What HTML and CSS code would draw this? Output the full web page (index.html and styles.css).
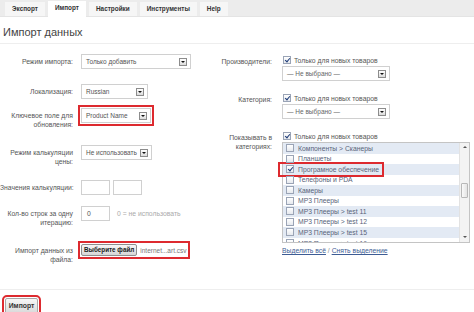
FILE: index.html
```html
<!DOCTYPE html>
<html lang="ru">
<head>
    <meta charset="UTF-8">
    <meta name="viewport" content="width=device-width, initial-scale=1.0">
    <title>Импорт данных</title>
    <link rel="stylesheet" href="styles.css">
</head>
<body>
    <div class="tabs">
        <span class="tab">Экспорт</span>
        <span class="tab active">Импорт</span>
        <span class="tab">Настройки</span>
        <span class="tab">Инструменты</span>
        <span class="tab">Help</span>
    </div>

    <h1 class="page-title">Импорт данных</h1>

    <div class="columns">
        <div class="col col-left">
            <div class="field">
                <label class="field-label">Режим импорта:</label>
                <span class="select select-import">Только добавить<i class="arrow"></i></span>
            </div>
            <div class="field">
                <label class="field-label">Локализация:</label>
                <span class="select select-locale">Russian<i class="arrow"></i></span>
            </div>
            <div class="field">
                <label class="field-label">Ключевое поле для обновления:</label>
                <span class="select select-key marked">Product Name<i class="arrow"></i></span>
            </div>
            <div class="field">
                <label class="field-label">Режим калькуляции цены:</label>
                <span class="select select-calc">Не использовать<i class="arrow"></i></span>
            </div>
            <div class="field">
                <label class="field-label nowrap">Значения калькуляции:</label>
                <div class="inline">
                    <span class="input"></span>
                    <span class="input"></span>
                </div>
            </div>
            <div class="field">
                <label class="field-label">Кол-во строк за одну итерацию:</label>
                <div class="inline">
                    <span class="input">0</span>
                    <span class="hint">0 = не использовать</span>
                </div>
            </div>
            <div class="field">
                <label class="field-label">Импорт данных из файла:</label>
                <div class="file-wrap">
                    <div class="file marked">
                        <span class="file-btn">Выберите файл</span>
                        <span class="file-name">internet...art.csv</span>
                    </div>
                </div>
            </div>
        </div>

        <div class="col col-right">
            <div class="field field-wide">
                <label class="field-label">Производители:</label>
                <div class="stack">
                    <span class="check-line"><i class="check on"></i>Только для новых товаров</span>
                    <span class="select select-wide">— Не выбрано —<i class="arrow"></i></span>
                </div>
            </div>
            <div class="field field-wide">
                <label class="field-label">Категория:</label>
                <div class="stack">
                    <span class="check-line"><i class="check on"></i>Только для новых товаров</span>
                    <span class="select select-wide">— Не выбрано —<i class="arrow"></i></span>
                </div>
            </div>
            <div class="field field-wide">
                <label class="field-label">Показывать в категориях:</label>
                <div class="stack">
                    <span class="check-line"><i class="check on"></i>Только для новых товаров</span>
                    <div class="list">
                        <div class="list-items">
                            <div class="list-row"><i class="check"></i>Компоненты &gt; Сканеры</div>
                            <div class="list-row"><i class="check"></i>Планшеты</div>
                            <div class="list-row"><span class="marked-row"><i class="check on"></i>Програмное обеспечение</span></div>
                            <div class="list-row"><i class="check"></i>Телефоны и PDA</div>
                            <div class="list-row"><i class="check"></i>Камеры</div>
                            <div class="list-row"><i class="check"></i>MP3 Плееры</div>
                            <div class="list-row"><i class="check"></i>MP3 Плееры &gt; test 11</div>
                            <div class="list-row"><i class="check"></i>MP3 Плееры &gt; test 12</div>
                            <div class="list-row"><i class="check"></i>MP3 Плееры &gt; test 15</div>
                            <div class="list-row list-row-cut"><i class="check"></i>MP3 Плееры &gt; test 16</div>
                        </div>
                        <div class="scrollbar">
                            <span class="scroll-btn up"></span>
                            <span class="scroll-track"><span class="scroll-thumb"></span></span>
                            <span class="scroll-btn down"></span>
                        </div>
                    </div>
                    <div class="list-links">
                        <a href="#">Выделить всё</a> / <a href="#">Снять выделение</a>
                    </div>
                </div>
            </div>
        </div>
    </div>

    <div class="footer">
        <span class="submit marked">Импорт</span>
    </div>
</body>
</html>
```

FILE: styles.css
```css
body {
    margin: 0;
    width: 474px;
    height: 312px;
    overflow: hidden;
    font-family: 'Liberation Sans', Arial, sans-serif;
    font-size: 6.8px;
    line-height: 9px;
    color: #555;
    background-color: #fff;
}

.tabs {
    display: flex;
    align-items: flex-end;
    gap: 3px;
    height: 17px;
    padding-left: 5px;
    background-color: #ececec;
    border-bottom: 1px solid #e4e4e4;
    box-sizing: border-box;
}

.tab {
    height: 14px;
    line-height: 14px;
    padding: 0 7px;
    background-color: #f6f6f6;
    color: #333;
    font-size: 6.4px;
    font-weight: bold;
}

.tab.active {
    height: 16px;
    margin-bottom: -1px;
    background-color: #fff;
}

.page-title {
    margin: 0;
    padding: 8px 3px 4px;
    font-size: 11px;
    line-height: 14px;
    font-weight: normal;
    color: #444;
    border-bottom: 1px solid #eee;
}

.columns {
    display: flex;
}

.col-left {
    width: 200px;
    padding-top: 10px;
    display: grid;
    grid-template-rows: 30px 24px 37px 35px 26px 37px auto;
}

.col-right {
    flex: 1;
    padding-top: 11px;
}

.field {
    display: grid;
    grid-template-columns: 73px auto;
    column-gap: 8px;
    align-items: start;
}

.field-wide {
    grid-template-columns: 72px auto;
    column-gap: 10px;
    margin-bottom: 12px;
}

.field-label {
    text-align: right;
    padding-top: 3px;
    color: #555;
}

.field-label.nowrap {
    white-space: nowrap;
}

.field-wide .field-label {
    padding-top: 2px;
}

.select {
    display: flex;
    align-items: center;
    justify-content: space-between;
    gap: 3px;
    height: 15px;
    box-sizing: border-box;
    padding: 0 3px 0 4px;
    border: 1px solid #d0d0d0;
    background-color: #fff;
    color: #555;
    font-size: 6.5px;
    white-space: nowrap;
}

.select-import { width: 110px; }
.select-locale { width: 67px; }
.select-key { width: 70px; }
.select-calc { justify-self: start; }
.select-wide { width: 108px; color: #666; }

.arrow {
    position: relative;
    flex: none;
    width: 8px;
    height: 8px;
    border: 1px solid #8c8c8c;
    background: linear-gradient(#fff, #dcdcdc);
    box-sizing: border-box;
}

.arrow::after {
    content: "";
    position: absolute;
    left: 1px;
    top: 2px;
    border-left: 2px solid transparent;
    border-right: 2px solid transparent;
    border-top: 2px solid #111;
}

.marked {
    outline: 2px solid #dd2a2f;
    outline-offset: 1px;
}

.inline {
    display: flex;
    align-items: center;
    gap: 3px;
}

.input {
    width: 29px;
    height: 15px;
    box-sizing: border-box;
    padding: 2px 5px;
    border: 1px solid #d0d0d0;
    color: #555;
}

.hint {
    margin-left: 4px;
    color: #aaa;
}

.file-wrap {
    display: flex;
    padding-top: 1px;
}

.file {
    display: flex;
    align-items: center;
    gap: 3px;
    white-space: nowrap;
}

.file-btn {
    height: 12px;
    line-height: 10px;
    padding: 0 2px;
    box-sizing: border-box;
    border: 1px solid #8e8e8e;
    border-radius: 2px;
    background: linear-gradient(#f6f6f6, #d6d6d6);
    color: #222;
    font-size: 6.3px;
    font-weight: bold;
}

.file-name {
    color: #777;
    font-size: 6.5px;
}

.stack {
    display: flex;
    flex-direction: column;
    align-items: flex-start;
    gap: 1px;
}

.check-line {
    display: flex;
    align-items: center;
    gap: 3px;
    height: 10px;
    padding-left: 1px;
    color: #555;
}

.check {
    position: relative;
    flex: none;
    width: 8px;
    height: 8px;
    box-sizing: border-box;
    border: 1px solid #9aa4b6;
    background: linear-gradient(#fff, #e6e9ee);
}

.check.on::after {
    content: "";
    position: absolute;
    left: 2px;
    top: 0;
    width: 2px;
    height: 4px;
    border-right: 1px solid #1e3c78;
    border-bottom: 1px solid #1e3c78;
    transform: rotate(40deg);
}

.list {
    display: flex;
    width: 188px;
    height: 101px;
    box-sizing: border-box;
    border: 1px solid #c4c4c4;
}

.list-items {
    flex: 1;
    display: flex;
    flex-direction: column;
}

.list-row {
    display: flex;
    align-items: center;
    gap: 4px;
    height: 10.5px;
    flex: none;
    padding-left: 3px;
    color: #59647a;
    white-space: nowrap;
}

.list-row:nth-child(odd) {
    background-color: #e3eaf4;
}

.list-row-cut {
    flex: 1;
    height: auto;
    min-height: 0;
    overflow: hidden;
    align-items: flex-start;
    padding-top: 1px;
}

.marked-row {
    display: flex;
    align-items: center;
    gap: 4px;
    margin-left: -5px;
    padding: 0 2px 0 5px;
    outline: 2px solid #dd2a2f;
    outline-offset: 1px;
}

.scrollbar {
    display: flex;
    flex-direction: column;
    width: 9px;
    border-left: 1px solid #e2e2e2;
    background-color: #f3f3f3;
}

.scroll-btn {
    position: relative;
    height: 9px;
    flex: none;
}

.scroll-btn::after {
    content: "";
    position: absolute;
    left: 3px;
    top: 3px;
    border-left: 2px solid transparent;
    border-right: 2px solid transparent;
}

.scroll-btn.up::after {
    border-bottom: 2px solid #555;
}

.scroll-btn.down::after {
    border-top: 2px solid #555;
}

.scroll-track {
    flex: 1;
    padding-top: 31px;
}

.scroll-thumb {
    display: block;
    height: 15px;
    margin: 0 1px;
    box-sizing: border-box;
    border: 1px solid #b8b8b8;
    border-radius: 1px;
    background: linear-gradient(90deg, #fafafa, #e4e4e4);
}

.list-links {
    margin-top: 2px;
    color: #888;
}

.list-links a {
    color: #3d5c94;
}

.footer {
    margin-top: 22px;
    padding: 8px 0 0 5px;
    border-top: 1px solid #eee;
}

.submit {
    display: inline-block;
    width: 33px;
    height: 16px;
    line-height: 14px;
    box-sizing: border-box;
    text-align: center;
    border: 1px solid #a8a8a8;
    border-radius: 2px;
    background: linear-gradient(#f7f7f7, #d9d9d9);
    color: #333;
    font-weight: bold;
}
```
